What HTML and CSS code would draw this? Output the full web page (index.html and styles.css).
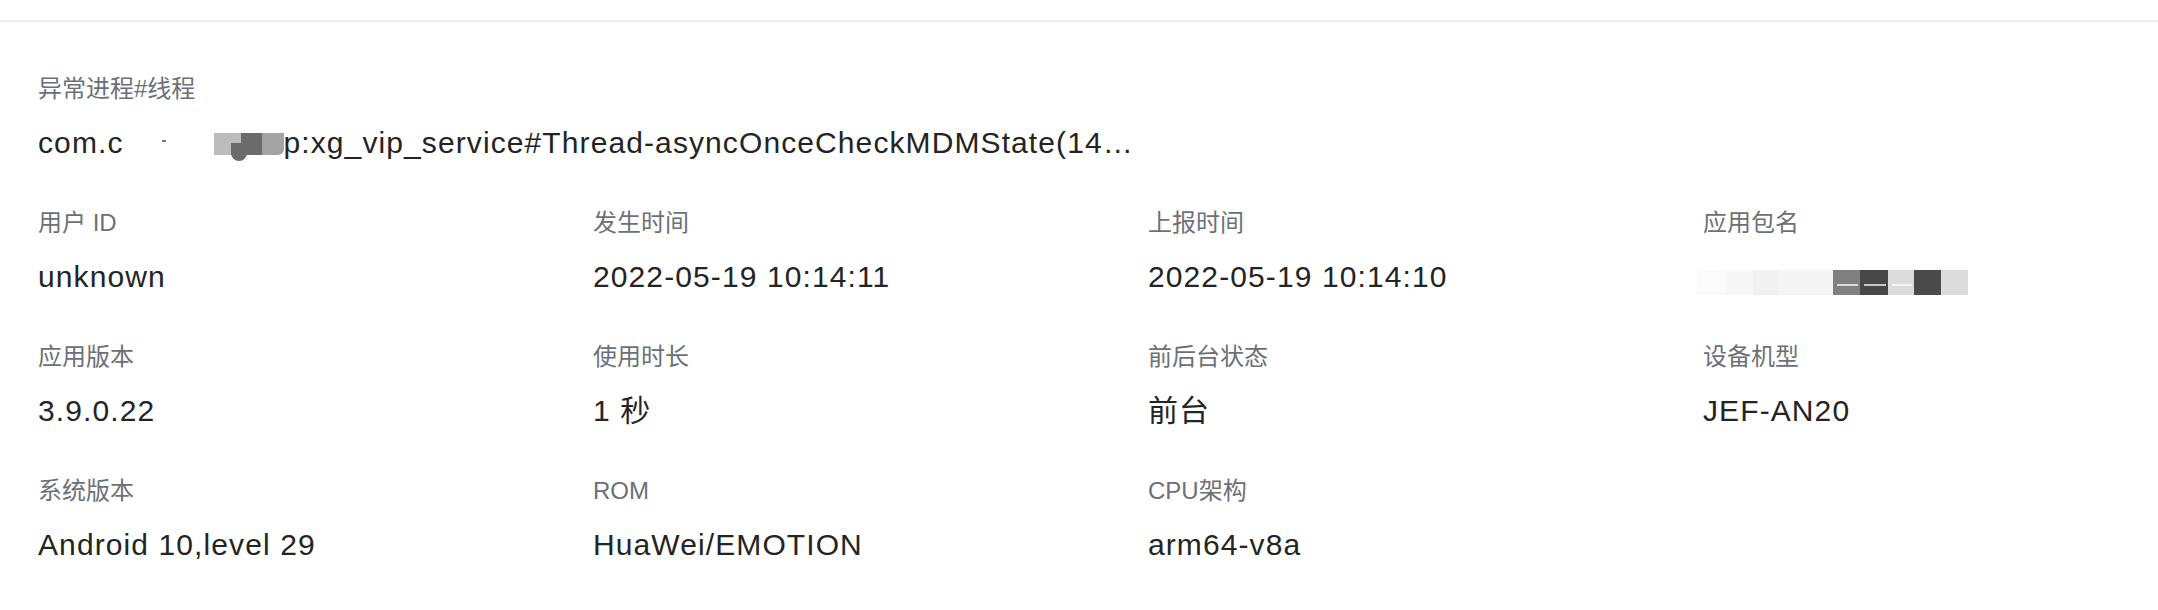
FILE: index.html
```html
<!DOCTYPE html>
<html lang="zh-CN">
<head>
<meta charset="utf-8">
<title>异常详情</title>
<link rel="stylesheet" href="styles.css">
</head>
<body>
<div class="topbar"></div>
<section class="detail">
  <div class="item wide">
    <div class="label">异常进程#线程</div>
    <div class="value">com.c<span class="mask-gap" aria-hidden="true"><i class="tick"></i></span><span class="mask m1" aria-hidden="true"></span><span class="mask m2" aria-hidden="true"><i class="blob"></i></span><span class="mask m3" aria-hidden="true"></span>p:xg_vip_service#Thread-asyncOnceCheckMDMState(14…</div>
  </div>

  <div class="item">
    <div class="label">用户 ID</div>
    <div class="value">unknown</div>
  </div>
  <div class="item">
    <div class="label">发生时间</div>
    <div class="value">2022-05-19 10:14:11</div>
  </div>
  <div class="item">
    <div class="label">上报时间</div>
    <div class="value">2022-05-19 10:14:10</div>
  </div>
  <div class="item">
    <div class="label">应用包名</div>
    <div class="value masked" aria-hidden="true">
      <span class="pk p1"></span><span class="pk p2"></span><span class="pk p3"></span><span class="pk p4"></span><span class="pk p5"><i class="dash"></i></span><span class="pk p6"><i class="dash"></i></span><span class="pk p7"><i class="dash"></i></span><span class="pk p8"></span>
    </div>
  </div>

  <div class="item">
    <div class="label">应用版本</div>
    <div class="value">3.9.0.22</div>
  </div>
  <div class="item">
    <div class="label">使用时长</div>
    <div class="value">1 秒</div>
  </div>
  <div class="item">
    <div class="label">前后台状态</div>
    <div class="value">前台</div>
  </div>
  <div class="item">
    <div class="label">设备机型</div>
    <div class="value">JEF-AN20</div>
  </div>

  <div class="item">
    <div class="label">系统版本</div>
    <div class="value">Android 10,level 29</div>
  </div>
  <div class="item">
    <div class="label">ROM</div>
    <div class="value">HuaWei/EMOTION</div>
  </div>
  <div class="item">
    <div class="label">CPU架构</div>
    <div class="value">arm64-v8a</div>
  </div>
</section>
</body>
</html>
```

FILE: styles.css
```css
html, body {
  margin: 0;
  padding: 0;
  background: #ffffff;
}

body {
  font-family: "Liberation Sans", "Noto Sans CJK SC", sans-serif;
  overflow: hidden;
}

.topbar {
  height: 20px;
  border-bottom: 2px solid #ececec;
}

.detail {
  display: grid;
  grid-template-columns: 555px 555px 555px 1fr;
  row-gap: 42px;
  padding: 50px 0 0 38px;
}

.item {
  min-width: 0;
}

.item.wide {
  grid-column: 1 / -1;
}

.label {
  font-size: 24px;
  line-height: 34px;
  color: #6c7078;
  white-space: nowrap;
}

.value {
  margin-top: 16px;
  font-size: 30px;
  line-height: 42px;
  letter-spacing: 1.1px;
  color: #242424;
  white-space: nowrap;
}

/* redaction blocks in the process name */
.mask-gap {
  display: inline-block;
  position: relative;
  width: 90px;
  height: 22px;
  vertical-align: -2px;
  background: #ffffff;
}

.tick {
  position: absolute;
  left: 38px;
  top: 7px;
  width: 4px;
  height: 2px;
  background: #777;
}

.mask {
  display: inline-block;
  height: 22px;
  vertical-align: -2px;
  position: relative;
}

.m1 { width: 27px; background: #bcbcbc; }
.m2 { width: 21px; background: #6b6b6b; }
.m3 { width: 22px; background: #a3a3a3; border-radius: 0 0 6px 0; }

.blob {
  position: absolute;
  left: -10px;
  top: 10px;
  width: 16px;
  height: 18px;
  border-radius: 0 0 8px 8px;
  background: #6b6b6b;
}

/* redaction blocks in the package name */
.value.masked {
  display: flex;
  align-items: flex-start;
  height: 42px;
  padding-top: 14px;
  box-sizing: border-box;
  margin-left: -6px;
}

.pk {
  display: block;
  height: 25px;
  position: relative;
}

.p1 { width: 28px; background: #fbfbfb; }
.p2 { width: 28px; background: #f7f7f7; }
.p3 { width: 26px; background: #f1f1f1; }
.p4 { width: 54px; background: #f5f5f5; }
.p5 { width: 27px; background: #808080; }
.p6 { width: 28px; background: #474747; }
.p7 { width: 26px; background: #dcdcdc; }
.p8 { width: 54px; background: linear-gradient(to right, #4a4a4a 0 50%, #dcdcdc 50% 100%); }

.dash {
  position: absolute;
  left: 4px;
  right: 2px;
  top: 14px;
  height: 2px;
  background: rgba(255, 255, 255, 0.7);
}
```
